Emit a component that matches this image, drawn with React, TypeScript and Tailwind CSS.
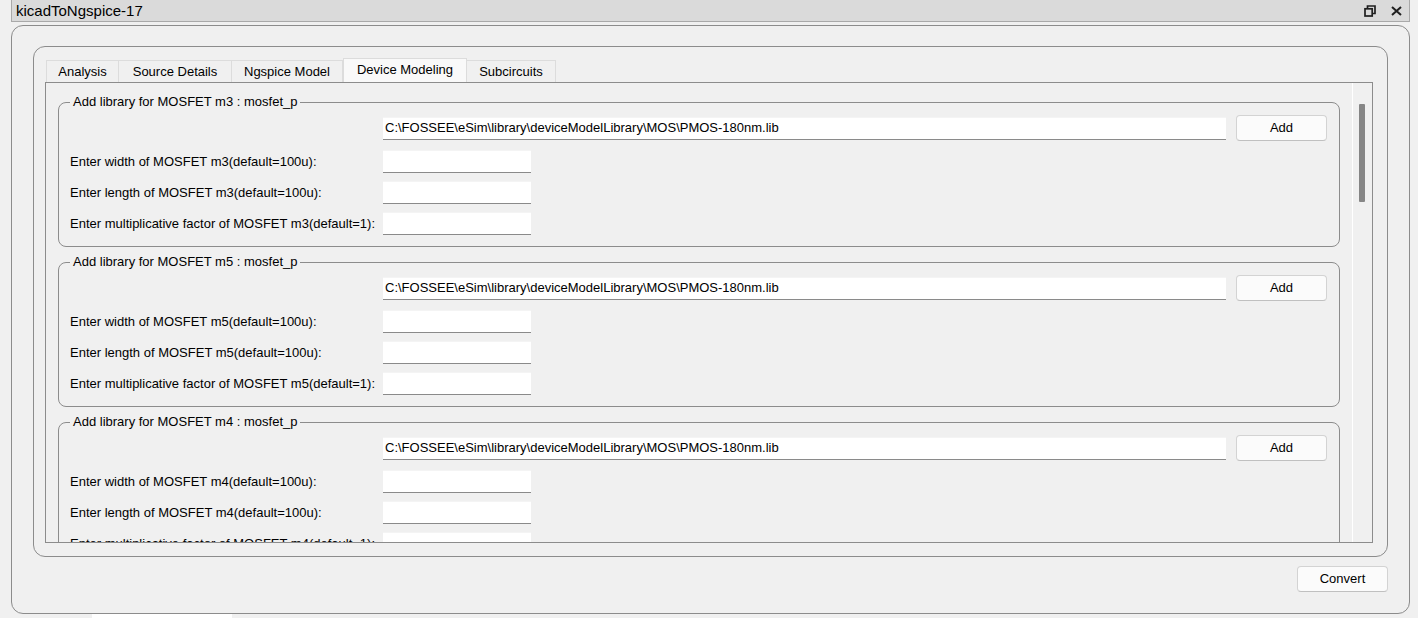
import React from "react";

const tabs = [
  { name: "Analysis", w: "w-[73px]" },
  { name: "Source Details", w: "w-[113px]" },
  { name: "Ngspice Model", w: "w-[111px]" },
  { name: "Device Modeling", w: "w-[124px]", active: true },
  { name: "Subcircuits", w: "w-[89px]" },
];

const mosfets = ["m3", "m5", "m4"];

const libPath = "C:\\FOSSEE\\eSim\\library\\deviceModelLibrary\\MOS\\PMOS-180nm.lib";

const TextInput = ({ value, className }: { value?: string; className: string }) => (
  <div
    className={`h-[23px] bg-white border-b border-[#8a8a8a] shadow-[inset_0_1px_0_#f4f4f4] flex items-center pl-[2px] whitespace-nowrap overflow-hidden ${className}`}
  >
    {value}
  </div>
);

const QtButton = ({ label, className }: { label: string; className: string }) => (
  <div
    className={`h-[26px] rounded-[4px] border border-[#d3d3d3] border-b-[#c0c0c0] bg-[#fbfbfb] flex items-center justify-center ${className}`}
  >
    {label}
  </div>
);

const Row = ({ label }: { label: string }) => (
  <div className="flex items-center h-[23px]">
    <div className="w-[313px] shrink-0 whitespace-nowrap">{label}</div>
    <TextInput className="w-[148px]" />
  </div>
);

const MosfetGroup = ({ id }: { id: string }) => (
  <fieldset className="border border-[#8c8c8c] rounded-[8px] pl-[11px] pr-[12px] pt-[5px] pb-[11px] mb-[7px]">
    <legend className="px-[3px] leading-[16px]">Add library for MOSFET {id} : mosfet_p</legend>
    <div className="flex items-center h-[26px]">
      <div className="w-[313px] shrink-0" />
      <TextInput value={libPath} className="flex-1" />
      <QtButton label="Add" className="w-[91px] ml-[10px]" />
    </div>
    <div className="flex flex-col gap-[8px] mt-[9px]">
      <Row label={`Enter width of MOSFET ${id}(default=100u):`} />
      <Row label={`Enter length of MOSFET ${id}(default=100u):`} />
      <Row label={`Enter multiplicative factor of MOSFET ${id}(default=1):`} />
    </div>
  </fieldset>
);

const RestoreIcon = () => (
  <svg width="12" height="12" viewBox="0 0 12 12" fill="none" stroke="#1f1f1f" strokeWidth="1.7">
    <path d="M3.5 3V1h7.5v7.5H9" />
    <rect x="1" y="3.8" width="7.2" height="7.2" />
  </svg>
);

const CloseIcon = () => (
  <svg width="11" height="10" viewBox="0 0 11 10" fill="none" stroke="#1f1f1f" strokeWidth="2">
    <path d="M1 1l9 8M10 1l-9 8" />
  </svg>
);

export default function App() {
  return (
    <div className="w-[1418px] h-[618px] bg-[#f0f0f0] overflow-hidden flex flex-col font-['Liberation_Sans',Arial,sans-serif] text-[13px] text-black">
      {/* dock title bar */}
      <div className="h-[22px] ml-[11px] mr-[8px] bg-[#dadada] border-l border-r border-b border-[#a9a9a9] flex items-center pl-[4px] pr-[7px]">
        <span className="text-[15px] leading-none flex-1">kicadToNgspice-17</span>
        <RestoreIcon />
        <div className="w-[15px]" />
        <CloseIcon />
      </div>

      <div className="pl-[11px] pr-[8px] pt-[3px]">
        <div className="h-[589px] border border-[#8c8c8c] rounded-[12px] flex flex-col px-[21px] pt-[20px]">
          {/* inner frame */}
          <div className="h-[511px] border border-[#8c8c8c] rounded-[12px] flex flex-col pl-[11px] pr-[14px] pt-[11px] pb-[13px]">
            <div className="flex items-end h-[24px] pl-[1px]">
              {tabs.map((t) =>
                t.active ? (
                  <div
                    key={t.name}
                    className={`${t.w} h-[24px] bg-[#f9f9f9] border border-b-0 border-[#dcdcdc] flex items-center justify-center pb-[1px]`}
                  >
                    {t.name}
                  </div>
                ) : (
                  <div
                    key={t.name}
                    className={`${t.w} h-[22px] bg-[#f0f0f0] border border-b-0 border-l-0 first:border-l border-[#dcdcdc] flex items-center justify-center pt-[1px]`}
                  >
                    {t.name}
                  </div>
                )
              )}
            </div>
            {/* tab pane */}
            <div className="flex-1 border border-[#8c8c8c] flex min-h-0">
              <div className="flex-1 overflow-hidden pl-[12px] pr-[12px] pt-[11px]">
                {mosfets.map((m) => (
                  <MosfetGroup key={m} id={m} />
                ))}
              </div>
              <div className="w-[20px] border-l border-white pl-[6px] pt-[21px]">
                <div className="w-[6px] h-[98px] bg-[#868686] rounded-[1px]" />
              </div>
            </div>
          </div>

          <div className="flex justify-end mt-[9px]">
            <QtButton label="Convert" className="w-[91px]" />
          </div>
        </div>
      </div>

      {/* strip below */}
      <div className="flex-1 flex">
        <div className="w-[92px]" />
        <div className="w-[140px] bg-white" />
      </div>
    </div>
  );
}
